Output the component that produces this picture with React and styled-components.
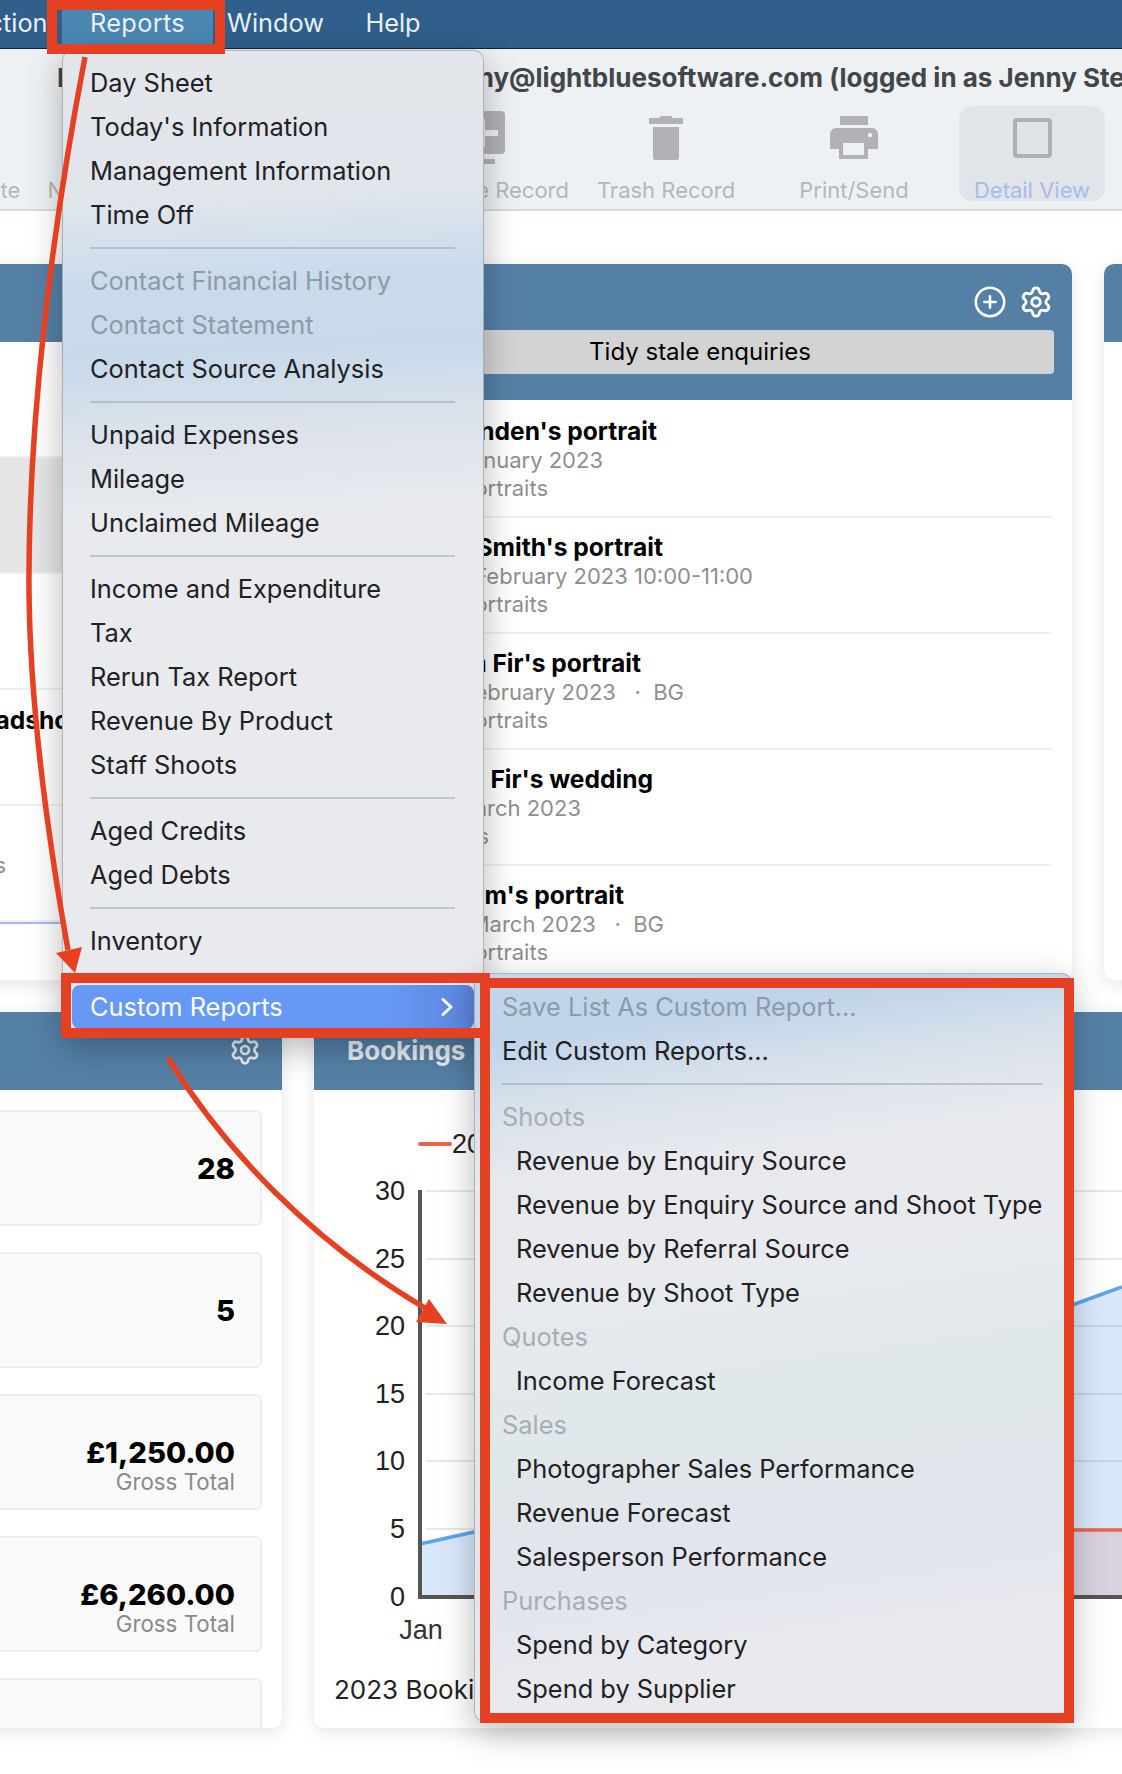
import React from "react";
import styled, { createGlobalStyle } from "styled-components";
import { CirclePlus, Settings } from "lucide-react";

const Global = createGlobalStyle`
  html, body { margin: 0; padding: 0; background: #fff; }
  body { font-family: Inter, "Liberation Sans", sans-serif; overflow: hidden; }
  * { box-sizing: border-box; }
`;

const RED = "#e64023";

const Page = styled.div`
  position: relative;
  width: 1122px;
  height: 1774px;
  overflow: hidden;
  display: flex;
  flex-direction: column;
  background: #fff;
`;

/* ---------- menu bar ---------- */
const MenuBar = styled.div`
  flex: none;
  height: 49px;
  display: flex;
  align-items: stretch;
  background: #2f5f8a;
  border-bottom: 1px solid #14202c;
  color: #eaf0f5;
  font-size: 25.3px;
  line-height: 46px;
`;
const BarCut = styled.div`
  flex: none;
  width: 69px;
  padding-right: 21.5px;
  display: flex;
  justify-content: flex-end;
  white-space: nowrap;
`;
const BarItem = styled.div`
  flex: none;
  padding: 0 20.5px 0 21px;
`;
const BarActive = styled.div`
  flex: none;
  width: 151px;
  margin: 0 -7px 0 -7px;
  padding-left: 28px;
  letter-spacing: 0.35px;
  background: #4a87b3;
`;

/* ---------- toolbar ---------- */
const Toolbar = styled.div`
  flex: none;
  height: 162px;
  background: #eef1f4;
  border-bottom: 2px solid #d8dadc;
  overflow: hidden;
`;
const WindowTitle = styled.div`
  height: 57px;
  padding-left: 57px;
  display: flex;
  align-items: center;
  white-space: nowrap;
  font-size: 26px;
  font-weight: 700;
  color: #444548;
`;
const TitleLead = styled.span`
  flex: none;
  width: 382px;
  overflow: hidden;
`;
const Tools = styled.div`
  display: flex;
  margin-left: -60px;
`;
const Tool = styled.div`
  flex: none;
  width: ${(p) => p.$w}px;
  height: 95px;
  display: flex;
  flex-direction: column;
  align-items: center;
  border-radius: 14px;
  background: ${(p) => (p.$on ? "#e1e4e8" : "transparent")};
`;
const ToolIcon = styled.div`
  flex: none;
  height: 67px;
  padding-bottom: 3px;
  display: flex;
  align-items: center;
  justify-content: center;
`;
const ToolLabel = styled.div`
  margin-top: 6px;
  font-size: 22px;
  line-height: 22px;
  white-space: nowrap;
  color: ${(p) => (p.$on ? "#a6bde9" : "#b5b6b9")};
`;
const SquareIcon = styled.div`
  width: 39px;
  height: 40px;
  border: 4px solid #aeafb3;
  border-radius: 4px;
  background: #e0e3e7;
`;

/* ---------- dashboard ---------- */
const Board = styled.div`
  flex: 1;
  margin-left: -100px;
  padding-top: 53px;
  display: flex;
  flex-direction: column;
  gap: 32px;
`;
const Row = styled.div`
  display: flex;
  gap: 32px;
  height: 716px;
  flex: none;
`;
const Panel = styled.section`
  flex: none;
  width: ${(p) => p.$w}px;
  display: flex;
  flex-direction: column;
  background: #fff;
  border-radius: 10px;
  box-shadow: 0 4px 18px rgba(0, 0, 0, 0.1);
  overflow: hidden;
`;
const PanelHead = styled.header`
  flex: none;
  height: 78px;
  padding: 0 21px 2px 33px;
  display: flex;
  align-items: center;
  justify-content: ${(p) => (p.$end ? "flex-end" : "flex-start")};
  background: #5580a6;
  color: #e9eef3;
  font-size: 26px;
  font-weight: 700;
`;
const TallHead = styled.header`
  flex: none;
  height: 136px;
  padding: 22px 19px 0 16px;
  background: #5580a6;
`;
const HeadIcons = styled.div`
  display: flex;
  justify-content: flex-end;
  align-items: center;
  gap: 12px;
  height: 32px;
  color: #fff;
`;
const WideButton = styled.div`
  margin: 12px -1px 0 0;
  height: 44px;
  border-radius: 4px;
  background: #d3d3d3;
  color: #000;
  font-size: 24px;
  line-height: 44px;
  text-align: center;
`;
const List = styled.div`
  margin: ${(p) => (p.$flush ? "0" : "2px 20px 0 16px")};
  display: flex;
  flex-direction: column;
`;
const ListRow = styled.div`
  height: 116px;
  padding-top: ${(p) => (p.$flat ? 16 : 15)}px;
  border-bottom: 2px solid #f0f0f0;
  background: ${(p) => (p.$sel ? "#e6e6e6" : "transparent")};
`;
const BlueRule = styled.div`
  height: 2px;
  background: #a9b9ee;
`;
const Line = styled.div`
  width: ${(p) => p.$w}px;
  height: 28.7px;
  line-height: 28.7px;
  text-align: right;
  white-space: nowrap;
  font-size: ${(p) => (p.$bold ? 24.6 : 22)}px;
  font-weight: ${(p) => (p.$bold ? 700 : 400)};
  color: ${(p) => (p.$bold ? "#000" : "#8f8f8f")};
`;
const CardScroll = styled.div`
  flex: none;
  height: 618px;
  margin-top: 20px;
  padding-right: 20px;
  overflow: hidden;
  display: flex;
  flex-direction: column;
  gap: 26px;
`;
const Card = styled.div`
  flex: none;
  height: 116px;
  padding: 39px 25px 0 0;
  text-align: right;
  background: #fafafa;
  border: 2px solid #eeeeee;
  border-left: none;
  border-radius: 0 6px 6px 0;
`;
const CardValue = styled.div`
  font-size: 29.2px;
  font-weight: 800;
  line-height: 36px;
  color: #000;
`;
const CardSub = styled.div`
  font-size: 22.3px;
  line-height: 22px;
  color: #8a8a8a;
`;
const ChartSvg = styled.svg`
  flex: none;
  display: block;
  font-family: "Liberation Sans", Arial, sans-serif;
  font-size: 27px;
  fill: #222;
`;
const ChartTitle = styled.div`
  margin-top: 12px;
  padding-left: 20px;
  font-size: 26px;
  line-height: 36px;
  color: #222;
`;

/* ---------- menus ---------- */
const Menu = styled.div`
  position: absolute;
  left: ${(p) => p.$x}px;
  top: ${(p) => p.$y}px;
  width: ${(p) => p.$w}px;
  height: ${(p) => p.$h}px;
  padding: ${(p) => p.$top}px 9px 10px;
  border-radius: 10px;
  border: 1px solid rgba(130, 135, 140, 0.55);
  box-shadow: 0 10px 34px rgba(0, 0, 0, 0.28);
  background: ${(p) => p.$bg};
`;
const Item = styled.div`
  height: 44px;
  line-height: 44px;
  padding-left: ${(p) => (p.$indent ? 32 : 18)}px;
  font-size: 25.4px;
  white-space: nowrap;
  color: ${(p) => (p.$off ? "#8d9aa8" : "#1f2124")};
`;
const GroupLabel = styled(Item)`
  color: #a9adb3;
`;
const Sep = styled.div`
  height: 22px;
  padding: 10px 19px 10px 18px;
  &::after {
    content: "";
    display: block;
    height: 2px;
    background: rgba(110, 125, 145, 0.32);
  }
`;
const ActiveItem = styled.div`
  height: 44px;
  line-height: 44px;
  padding: 0 21px 0 18px;
  display: flex;
  align-items: center;
  justify-content: space-between;
  border-radius: 8px;
  color: #fff;
  font-size: 25.4px;
  background: linear-gradient(90deg, #6699f6 0%, #6699f6 78%, #5c86de 100%);
`;
const RedBox = styled.div`
  position: absolute;
  left: ${(p) => p.$x}px;
  top: ${(p) => p.$y}px;
  width: ${(p) => p.$w}px;
  height: ${(p) => p.$h}px;
  border: 10px solid ${RED};
`;
const ArrowLayer = styled.svg`
  position: absolute;
  left: 0;
  top: 0;
  pointer-events: none;
`;

const MAIN_BG = `linear-gradient(177deg, #e3e6ea 0, #e1e6ec 150px, #c9daeb 245px, #c8d9ea 310px, #dbe2ea 385px, #e8eaee 470px, #e8eaee 100%)`;
const SUB_BG = `linear-gradient(172deg, #c2d6ea 0, #bfd4ea 70px, #d6e0ea 130px, #e7e9ed 210px, #e8eaee 330px, #dfe8ea 470px, #e0e6ea 540px, #e3e5ee 620px, #e8eaee 720px)`;

const mainMenu = [
  ["Day Sheet", "Today's Information", "Management Information", "Time Off"],
  ["!Contact Financial History", "!Contact Statement", "Contact Source Analysis"],
  ["Unpaid Expenses", "Mileage", "Unclaimed Mileage"],
  ["Income and Expenditure", "Tax", "Rerun Tax Report", "Revenue By Product", "Staff Shoots"],
  ["Aged Credits", "Aged Debts"],
  ["Inventory"],
];

const subMenu = [
  ["Shoots", ["Revenue by Enquiry Source", "Revenue by Enquiry Source and Shoot Type", "Revenue by Referral Source", "Revenue by Shoot Type"]],
  ["Quotes", ["Income Forecast"]],
  ["Sales", ["Photographer Sales Performance", "Revenue Forecast", "Salesperson Performance"]],
  ["Purchases", ["Spend by Category", "Spend by Supplier"]],
];

const L = 346;
const DOT = "\u00a0\u00a0\u00a0·\u00a0\u00a0";
const shoots = [
  ["Jo Linden's portrait", 657, "21 January 2023", 603, "Portraits", 548],
  ["Ann Smith's portrait", 663, "23 February 2023 10:00-11:00", 753, "Portraits", 548],
  ["Tom Fir's portrait", 641, `25 February 2023${DOT}BG`, 684, "Portraits", 548],
  ["Tom Fir's wedding", 653, "4 March 2023", 581, "Weddings", 489],
  ["Pam's portrait", 624, `18 March 2023${DOT}BG`, 664, "Portraits", 548],
];

const cards = [
  ["28"],
  ["5"],
  ["£1,250.00", "Gross Total"],
  ["£6,260.00", "Gross Total"],
  [""],
];

const ICON = "#b2b2b6";

const TrashGlyph = () => (
  <svg width="34" height="46" viewBox="0 0 34 46">
    <path d="M12 1h10l2 2h10v6H0V3h10z" fill={ICON} />
    <path d="M4 12h26v31a2 2 0 0 1-2 2H6a2 2 0 0 1-2-2z" fill={ICON} />
  </svg>
);
const PrinterGlyph = () => (
  <svg width="48" height="44" viewBox="0 0 48 44">
    <rect x="10" y="0" width="28" height="9" fill={ICON} />
    <path d="M6 12h36a6 6 0 0 1 6 6v15H38v10H9V33H0V18a6 6 0 0 1 6-6z" fill={ICON} />
    <rect x="13" y="27" width="21" height="12" fill="#eef1f4" />
    <circle cx="40" cy="19" r="2.2" fill="#eef1f4" />
  </svg>
);
const RecordGlyph = () => (
  <svg width="60" height="58" viewBox="0 0 60 58">
    <rect x="10" y="2" width="45" height="43" rx="4" fill={ICON} />
    <rect x="16" y="21" width="32" height="6" fill="#eef1f4" />
    <rect x="29" y="10" width="6" height="28" fill="#eef1f4" />
    <rect x="15" y="50" width="30" height="5" fill={ICON} />
  </svg>
);
const SubmenuChevron = () => (
  <svg width="12" height="18" viewBox="0 0 12 18">
    <polyline points="2,1.5 10,9 2,16.5" fill="none" stroke="#fff" strokeWidth="3" strokeLinecap="round" strokeLinejoin="round" />
  </svg>
);

export default function App() {
  return (
    <Page>
      <Global />
      <MenuBar>
        <BarCut>Collection</BarCut>
        <BarActive>Reports</BarActive>
        <BarItem>Window</BarItem>
        <BarItem>Help</BarItem>
      </MenuBar>

      <Toolbar>
        <WindowTitle>
          <TitleLead>Light Blue Photography Studio</TitleLead>
          <span>jenny@lightbluesoftware.com (logged in as Jenny Stevens)</span>
        </WindowTitle>
        <Tools>
          <Tool $w={94}><ToolIcon /><ToolLabel>Delete</ToolLabel></Tool>
          <Tool $w={154}><ToolIcon /><ToolLabel>New Record</ToolLabel></Tool>
          <Tool $w={189}><ToolIcon /><ToolLabel>Save</ToolLabel></Tool>
          <Tool $w={206}><ToolIcon><RecordGlyph /></ToolIcon><ToolLabel>Duplicate Record</ToolLabel></Tool>
          <Tool $w={166}><ToolIcon><TrashGlyph /></ToolIcon><ToolLabel>Trash Record</ToolLabel></Tool>
          <Tool $w={210}><ToolIcon><PrinterGlyph /></ToolIcon><ToolLabel>Print/Send</ToolLabel></Tool>
          <Tool $w={146} $on><ToolIcon><SquareIcon /></ToolIcon><ToolLabel $on>Detail View</ToolLabel></Tool>
          <Tool $w={126}><ToolIcon /><ToolLabel>List View</ToolLabel></Tool>
        </Tools>
      </Toolbar>

      <Board>
        <Row>
          <Panel $w={398}>
            <PanelHead />
            <List $flush>
              <ListRow $flat />
              <ListRow $flat $sel />
              <ListRow $flat />
              <ListRow $flat>
                <Line $bold $w={190}>Roadshow</Line>
              </ListRow>
              <ListRow $flat>
                <Line />
                <Line $w={106}>Portraits</Line>
              </ListRow>
              <BlueRule />
            </List>
          </Panel>
          <Panel $w={742}>
            <TallHead>
              <HeadIcons>
                <CirclePlus size={34} strokeWidth={1.8} />
                <Settings size={34} strokeWidth={2} />
              </HeadIcons>
              <WideButton>Tidy stale enquiries</WideButton>
            </TallHead>
            <List>
              {shoots.map((s) => (
                <ListRow key={s[0]}>
                  <Line $bold $w={s[1] - L}>{s[0]}</Line>
                  <Line $w={s[3] - L}>{s[2]}</Line>
                  <Line $w={s[5] - L}>{s[4]}</Line>
                </ListRow>
              ))}
            </List>
          </Panel>
          <Panel $w={300}>
            <PanelHead />
          </Panel>
        </Row>
        <Row>
          <Panel $w={382}>
            <PanelHead $end>
              <Settings size={32} strokeWidth={2} color="#e6ecf2" />
            </PanelHead>
            <CardScroll>
              {cards.map((c, i) => (
                <Card key={i}>
                  <CardValue>{c[0]}</CardValue>
                  {c[1] && <CardSub>{c[1]}</CardSub>}
                </Card>
              ))}
            </CardScroll>
          </Panel>
          <Panel $w={900}>
            <PanelHead>Bookings</PanelHead>
            <ChartSvg width="808" height="570" viewBox="314 1090 808 570">
              <line x1="420" y1="1144" x2="450" y2="1144" stroke="#e8654f" strokeWidth="4" strokeLinecap="round" />
              <text x="452" y="1153">2023</text>
              <polygon points="420,1544 474,1532 1075,1304 1122,1287 1122,1597 420,1597" fill="#d9e9fb" />
              <polygon points="480,1597 1000,1530 1122,1530 1122,1597" fill="#d7d2de" />
              {[1191, 1259, 1326, 1394, 1461, 1529].map((y) => (
                <line key={y} x1="426" y1={y} x2="1122" y2={y} stroke="#000" strokeOpacity="0.09" strokeWidth="2" />
              ))}
              <polyline points="420,1544 474,1532 1075,1304 1122,1287" fill="none" stroke="#5ba4ef" strokeWidth="3.5" />
              <polyline points="480,1597 1000,1530 1122,1530" fill="none" stroke="#e8654f" strokeWidth="3.5" />
              <path d="M420 1190V1597H1122" fill="none" stroke="#555" strokeWidth="4" />
              {[["30", 1191], ["25", 1259], ["20", 1326], ["15", 1394], ["10", 1461], ["5", 1529], ["0", 1597]].map(([t, y]) => (
                <text key={t} x="405" y={y + 9} textAnchor="end">{t}</text>
              ))}
              <text x="421" y="1639" textAnchor="middle" fill="#333">Jan</text>
            </ChartSvg>
            <ChartTitle>2023 Bookings</ChartTitle>
          </Panel>
        </Row>
      </Board>

      <Menu $x={62} $y={50} $w={422} $h={988} $top={10} $bg={MAIN_BG}>
        {mainMenu.map((group, i) => (
          <React.Fragment key={i}>
            {i > 0 && <Sep />}
            {group.map((t) => (
              <Item key={t} $off={t[0] === "!"}>{t.replace("!", "")}</Item>
            ))}
          </React.Fragment>
        ))}
        <Sep />
        <ActiveItem>
          Custom Reports
          <SubmenuChevron />
        </ActiveItem>
      </Menu>

      <Menu $x={474} $y={973} $w={598} $h={749} $top={11} $bg={SUB_BG}>
        <Item $off>Save List As Custom Report...</Item>
        <Item>Edit Custom Reports...</Item>
        <Sep />
        {subMenu.map(([label, items]) => (
          <React.Fragment key={label}>
            <GroupLabel>{label}</GroupLabel>
            {items.map((t) => (
              <Item key={t} $indent>{t}</Item>
            ))}
          </React.Fragment>
        ))}
      </Menu>

      <RedBox $x={47} $y={0} $w={178} $h={54} />
      <RedBox $x={61} $y={973} $w={429} $h={65} />
      <RedBox $x={480} $y={978} $w={594} $h={745} />

      <ArrowLayer width="1122" height="1774" viewBox="0 0 1122 1774">
        <path d="M85 57C50 240 28 430 29 590C30 720 52 860 68 950" fill="none" stroke={RED} strokeWidth="5.5" />
        <polygon points="56,953 82,947 75,973" fill={RED} />
        <path d="M168 1058C225 1150 310 1240 425 1308" fill="none" stroke={RED} strokeWidth="5.5" />
        <polygon points="429,1299 416,1322 447,1324" fill={RED} />
      </ArrowLayer>
    </Page>
  );
}
